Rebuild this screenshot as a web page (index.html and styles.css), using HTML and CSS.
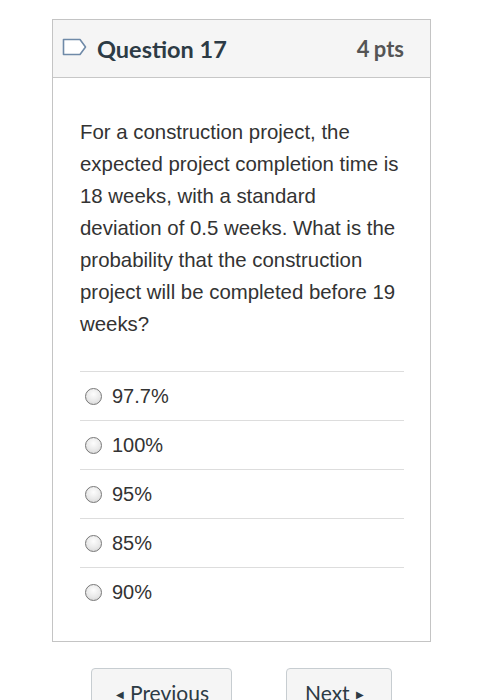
FILE: index.html
```html
<!DOCTYPE html>
<html>
<head>
<meta charset="utf-8">
<link rel="stylesheet" href="styles.css">
</head>
<body>
<div class="card">
  <div class="header">
    <div class="title">
      <svg class="flag" width="26" height="18" viewBox="0 0 26 18">
        <path d="M1.5 1.5 H18 L23.5 9 L18 16.5 H1.5 Z" fill="#fff" stroke="#6f8aa8" stroke-width="1.6" stroke-linejoin="round"/>
      </svg>
      <span class="qname">Question 17</span>
    </div>
    <span class="pts">4 pts</span>
  </div>
  <div class="body">
    <p class="qtext">For a construction project, the expected project completion time is 18 weeks, with a standard deviation of 0.5 weeks. What is the probability that the construction project will be completed before 19 weeks?</p>
    <div class="answers">
      <div class="answer"><span class="radio"></span><span class="label">97.7%</span></div>
      <div class="answer"><span class="radio"></span><span class="label">100%</span></div>
      <div class="answer"><span class="radio"></span><span class="label">95%</span></div>
      <div class="answer"><span class="radio"></span><span class="label">85%</span></div>
      <div class="answer"><span class="radio"></span><span class="label">90%</span></div>
    </div>
  </div>
</div>
<div class="nav">
  <button class="btn prev"><span class="tri">&#9664;</span> Previous</button>
  <button class="btn next">Next <span class="tri">&#9654;</span></button>
</div>
</body>
</html>
```
FILE: styles.css
```css
html, body {
  margin: 0;
  padding: 0;
  background: #fff;
}
body {
  font-family: "Liberation Sans", Arial, sans-serif;
  color: #333;
  width: 482px;
  height: 700px;
  overflow: hidden;
}
.card {
  margin: 19px 0 0 52px;
  width: 377px;
  border: 1px solid #c4c4c4;
  box-sizing: content-box;
}
.header {
  height: 57px;
  background: #f5f5f5;
  border-bottom: 1px solid #c7c7c7;
  display: flex;
  align-items: center;
  justify-content: space-between;
  padding: 0 26px 0 9px;
}
.title {
  display: flex;
  align-items: center;
  gap: 9px;
}
.flag {
  display: block;
  margin-top: -3px;
}
.qname {
  font-family: Lato, sans-serif;
  font-weight: 700;
  font-size: 23.5px;
  color: #2d3b45;
}
.pts {
  font-family: Lato, sans-serif;
  font-weight: 700;
  font-size: 22px;
  color: #555;
  word-spacing: -1px;
}
.body {
  padding: 38px 26px 25px 27px;
}
.qtext {
  margin: 0;
  font-size: 20.4px;
  line-height: 32px;
  color: #333;
  width: 321px;
}
.answers {
  margin-top: 31px;
}
.answer {
  height: 48px;
  border-top: 1px solid #ddd;
  display: flex;
  align-items: center;
  padding-left: 5px;
}
.radio {
  width: 15px;
  height: 15px;
  border-radius: 50%;
  border: 1px solid #777;
  background: radial-gradient(circle at 50% 35%, #fdfdfd 0%, #e9e9e9 55%, #cfcfcf 100%);
  margin-right: 10px;
  flex: none;
}
.label {
  font-size: 20px;
  color: #333;
}
.nav {
  display: flex;
  margin-top: 26px;
  padding-left: 91px;
  gap: 54px;
}
.btn {
  font-family: Lato, sans-serif;
  font-size: 21px;
  color: #2d3b45;
  background: #f5f5f5;
  border: 1px solid #c7cdd1;
  border-radius: 4px;
  height: 44px;
  padding: 0 16px;
  display: flex;
  align-items: flex-start;
  padding-top: 11px;
  gap: 6px;
}
.prev {
  width: 141px;
  padding-left: 24px;
}
.next {
  width: 106px;
  padding-left: 18px;
}
.tri {
  font-size: 10px;
  line-height: 20px;
  padding-top: 4px;
}
```
